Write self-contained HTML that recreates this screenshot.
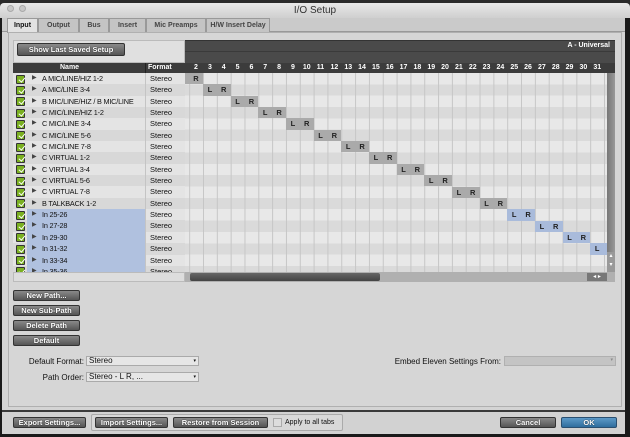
<!DOCTYPE html>
<html><head><style>
*{margin:0;padding:0;box-sizing:border-box}
body{width:630px;height:437px;overflow:hidden;background:#1a1a1a;font-family:"Liberation Sans",sans-serif;font-size:8px;color:#111;position:relative}
.a{position:absolute}
.btn{position:absolute;height:11px;background:linear-gradient(#8a8a8a,#555);border:1px solid #333;border-radius:2px;color:#fff;font-weight:bold;font-size:7.5px;text-align:center;line-height:9px;text-shadow:0 0 1px #000}
.tab{position:absolute;top:18px;height:14px;background:#c4c4c4;border:1px solid #999;border-bottom:none;font-size:7px;font-weight:bold;color:#444;text-align:center;line-height:13px}
.row{height:11.35px;position:relative}
.lr{position:absolute;height:11.35px;line-height:11.35px;font-weight:bold;font-size:7.5px;background:#aaa;color:#222}
.lr span{position:absolute;width:13.83px;text-align:center}
.blue{background:#a9bbdb}
.chk{position:absolute;left:3px;top:1.5px;width:9px;height:9px;background:#7ab020;border:1px solid #333;border-radius:1px}
.chk:after{content:"";position:absolute;left:2.5px;top:0px;width:2.5px;height:5px;border:solid #fff;border-width:0 1.5px 1.5px 0;transform:rotate(40deg)}
.tri{position:absolute;left:19px;top:0;font-size:6px;color:#444;line-height:11.35px}
.nm{position:absolute;left:29px;line-height:11.35px;white-space:nowrap;font-size:7.3px;letter-spacing:-0.2px}
.fm{position:absolute;left:137px;line-height:11.35px;font-size:7.5px}
.nb{position:absolute;width:13.83px;text-align:center;color:#fff;font-weight:bold;font-size:7px;top:64px}
</style></head><body>
<div class="a" style="left:0;top:0;width:630px;height:5px;background:#2a2a2a"></div>
<div class="a" style="left:0;top:3px;width:630px;height:15px;background:linear-gradient(#e8e8e8,#cfcfcf);border-radius:4px 4px 0 0;text-align:center;font-size:10px;line-height:15px;color:#333">I/O Setup</div>
<div class="a" style="left:7px;top:5px;width:7px;height:7px;border-radius:50%;background:#c8c8c8;border:1px solid #aaa"></div>
<div class="a" style="left:19px;top:5px;width:7px;height:7px;border-radius:50%;background:#c8c8c8;border:1px solid #aaa"></div>
<div class="a" style="left:2px;top:18px;width:623px;height:416px;background:#d4d4d4"></div>
<div class="a" style="left:2px;top:18px;width:623px;height:14px;background:#cacaca;border-bottom:1px solid #999"></div>
<div class="tab" style="left:7px;width:31px;background:#e2e2e2;height:15px;color:#111">Input</div>
<div class="tab" style="left:38px;width:41px">Output</div>
<div class="tab" style="left:79px;width:30px">Bus</div>
<div class="tab" style="left:109px;width:37px">Insert</div>
<div class="tab" style="left:146px;width:60px">Mic Preamps</div>
<div class="tab" style="left:206px;width:64px">H/W Insert Delay</div>
<div class="a" style="left:8px;top:32px;width:614px;height:375px;background:#d6d6d6;border:1px solid #b0b0b0"></div>
<div class="a" style="left:13px;top:40px;width:172px;height:23px;background:#e0e0e0;border:1px solid #bbb"></div>
<div class="btn" style="left:17px;top:43px;width:108px;height:13px;line-height:11px">Show Last Saved Setup</div>
<div class="a" style="left:185px;top:40px;width:430px;height:23px;background:#4a4a4a;border-top:1px solid #333"></div>
<div class="a" style="left:185px;top:51px;width:430px;height:1px;background:#3a3a3a"></div>
<div class="a" style="left:540px;top:42px;width:70px;text-align:right;color:#fff;font-weight:bold;font-size:7px">A - Universal</div>
<div class="a" style="left:13px;top:63px;width:602px;height:10px;background:#3c3c3c"></div>
<div class="a" style="left:60px;top:64px;color:#fff;font-weight:bold;font-size:7px">Name</div>
<div class="a" style="left:148px;top:64px;color:#fff;font-weight:bold;font-size:7px">Format</div>
<div class="a" style="left:145px;top:63px;width:1px;height:10px;background:#222"></div>
<div class="nb" style="left:189px">2</div><div class="nb" style="left:203px">3</div><div class="nb" style="left:216.8px">4</div><div class="nb" style="left:230.7px">5</div><div class="nb" style="left:244.5px">6</div><div class="nb" style="left:258.3px">7</div><div class="nb" style="left:272.2px">8</div><div class="nb" style="left:286px">9</div><div class="nb" style="left:299.8px">10</div><div class="nb" style="left:313.6px">11</div><div class="nb" style="left:327.5px">12</div><div class="nb" style="left:341.3px">13</div><div class="nb" style="left:355.1px">14</div><div class="nb" style="left:369px">15</div><div class="nb" style="left:382.8px">16</div><div class="nb" style="left:396.6px">17</div><div class="nb" style="left:410.5px">18</div><div class="nb" style="left:424.3px">19</div><div class="nb" style="left:438.1px">20</div><div class="nb" style="left:452px">21</div><div class="nb" style="left:465.8px">22</div><div class="nb" style="left:479.6px">23</div><div class="nb" style="left:493.5px">24</div><div class="nb" style="left:507.3px">25</div><div class="nb" style="left:521.1px">26</div><div class="nb" style="left:535px">27</div><div class="nb" style="left:548.8px">28</div><div class="nb" style="left:562.6px">29</div><div class="nb" style="left:576.5px">30</div><div class="nb" style="left:590.3px">31</div>
<div class="a" style="left:13px;top:73px;width:172px;height:199px;overflow:hidden;background:#dcdcdc">
<div class="row" style="background:#e4e4e4"><div class="chk"></div><span class="tri">▶</span><span class="nm">A MIC/LINE/HIZ 1-2</span><span class="fm">Stereo</span></div>
<div class="row" style="background:#d8d8d8"><div class="chk"></div><span class="tri">▶</span><span class="nm">A MIC/LINE 3-4</span><span class="fm">Stereo</span></div>
<div class="row" style="background:#e4e4e4"><div class="chk"></div><span class="tri">▶</span><span class="nm">B MIC/LINE/HIZ / B MIC/LINE</span><span class="fm">Stereo</span></div>
<div class="row" style="background:#d8d8d8"><div class="chk"></div><span class="tri">▶</span><span class="nm">C MIC/LINE/HIZ 1-2</span><span class="fm">Stereo</span></div>
<div class="row" style="background:#e4e4e4"><div class="chk"></div><span class="tri">▶</span><span class="nm">C MIC/LINE 3-4</span><span class="fm">Stereo</span></div>
<div class="row" style="background:#d8d8d8"><div class="chk"></div><span class="tri">▶</span><span class="nm">C MIC/LINE 5-6</span><span class="fm">Stereo</span></div>
<div class="row" style="background:#e4e4e4"><div class="chk"></div><span class="tri">▶</span><span class="nm">C MIC/LINE 7-8</span><span class="fm">Stereo</span></div>
<div class="row" style="background:#d8d8d8"><div class="chk"></div><span class="tri">▶</span><span class="nm">C VIRTUAL 1-2</span><span class="fm">Stereo</span></div>
<div class="row" style="background:#e4e4e4"><div class="chk"></div><span class="tri">▶</span><span class="nm">C VIRTUAL 3-4</span><span class="fm">Stereo</span></div>
<div class="row" style="background:#d8d8d8"><div class="chk"></div><span class="tri">▶</span><span class="nm">C VIRTUAL 5-6</span><span class="fm">Stereo</span></div>
<div class="row" style="background:#e4e4e4"><div class="chk"></div><span class="tri">▶</span><span class="nm">C VIRTUAL 7-8</span><span class="fm">Stereo</span></div>
<div class="row" style="background:#d8d8d8"><div class="chk"></div><span class="tri">▶</span><span class="nm">B TALKBACK 1-2</span><span class="fm">Stereo</span></div>
<div class="row" style="background:linear-gradient(to right,#e4e4e4 14px,#b0c1df 14px,#b0c1df 132px,#e4e4e4 132px)"><div class="chk"></div><span class="tri">▶</span><span class="nm">In 25-26</span><span class="fm">Stereo</span></div>
<div class="row" style="background:linear-gradient(to right,#d8d8d8 14px,#b0c1df 14px,#b0c1df 132px,#d8d8d8 132px)"><div class="chk"></div><span class="tri">▶</span><span class="nm">In 27-28</span><span class="fm">Stereo</span></div>
<div class="row" style="background:linear-gradient(to right,#e4e4e4 14px,#b0c1df 14px,#b0c1df 132px,#e4e4e4 132px)"><div class="chk"></div><span class="tri">▶</span><span class="nm">In 29-30</span><span class="fm">Stereo</span></div>
<div class="row" style="background:linear-gradient(to right,#d8d8d8 14px,#b0c1df 14px,#b0c1df 132px,#d8d8d8 132px)"><div class="chk"></div><span class="tri">▶</span><span class="nm">In 31-32</span><span class="fm">Stereo</span></div>
<div class="row" style="background:linear-gradient(to right,#e4e4e4 14px,#b0c1df 14px,#b0c1df 132px,#e4e4e4 132px)"><div class="chk"></div><span class="tri">▶</span><span class="nm">In 33-34</span><span class="fm">Stereo</span></div>
<div class="row" style="background:linear-gradient(to right,#d8d8d8 14px,#b0c1df 14px,#b0c1df 132px,#d8d8d8 132px)"><div class="chk"></div><span class="tri">▶</span><span class="nm">In 35-36</span><span class="fm">Stereo</span></div>
</div>
<div class="a" style="left:145px;top:73px;width:1px;height:199px;background:#c4c4c4"></div>
<div class="a" style="left:185px;top:73px;width:422px;height:199px;overflow:hidden;background:repeating-linear-gradient(#e8e8e8 0,#e8e8e8 11.35px,#dadada 11.35px,#dadada 22.7px)">
<div class="a" style="left:0;top:0;width:422px;height:199px;background-image:linear-gradient(to right,#c6c6c6 1px,transparent 1px);background-size:13.83px 100%;background-position:4.17px 0"></div>
<div class="lr" style="left:0;top:0;width:18px"><span style="left:4px">R</span></div>
<div class="lr" style="left:18px;top:11.35px;width:27.66px"><span style="left:0">L</span><span style="left:13.83px">R</span></div>
<div class="lr" style="left:45.7px;top:22.7px;width:27.66px"><span style="left:0">L</span><span style="left:13.83px">R</span></div>
<div class="lr" style="left:73.3px;top:34.05px;width:27.66px"><span style="left:0">L</span><span style="left:13.83px">R</span></div>
<div class="lr" style="left:101px;top:45.4px;width:27.66px"><span style="left:0">L</span><span style="left:13.83px">R</span></div>
<div class="lr" style="left:128.6px;top:56.75px;width:27.66px"><span style="left:0">L</span><span style="left:13.83px">R</span></div>
<div class="lr" style="left:156.3px;top:68.1px;width:27.66px"><span style="left:0">L</span><span style="left:13.83px">R</span></div>
<div class="lr" style="left:184px;top:79.45px;width:27.66px"><span style="left:0">L</span><span style="left:13.83px">R</span></div>
<div class="lr" style="left:211.6px;top:90.8px;width:27.66px"><span style="left:0">L</span><span style="left:13.83px">R</span></div>
<div class="lr" style="left:239.3px;top:102.15px;width:27.66px"><span style="left:0">L</span><span style="left:13.83px">R</span></div>
<div class="lr" style="left:267px;top:113.5px;width:27.66px"><span style="left:0">L</span><span style="left:13.83px">R</span></div>
<div class="lr" style="left:294.6px;top:124.85px;width:27.66px"><span style="left:0">L</span><span style="left:13.83px">R</span></div>
<div class="lr blue" style="left:322.3px;top:136.2px;width:27.66px"><span style="left:0">L</span><span style="left:13.83px">R</span></div>
<div class="lr blue" style="left:350px;top:147.55px;width:27.66px"><span style="left:0">L</span><span style="left:13.83px">R</span></div>
<div class="lr blue" style="left:377.6px;top:158.9px;width:27.66px"><span style="left:0">L</span><span style="left:13.83px">R</span></div>
<div class="lr blue" style="left:405.3px;top:170.25px;width:16.7px"><span style="left:0">L</span></div>
</div>
<div class="a" style="left:607px;top:73px;width:8px;height:199px;background:linear-gradient(to right,#777,#999)"></div>
<div class="a" style="left:607px;top:252px;width:8px;height:20px;background:#999;color:#fff;font-size:6px;text-align:center;line-height:9px">▴<br>▾</div>
<div class="a" style="left:13px;top:272px;width:172px;height:10px;background:#ddd;border:1px solid #bbb"></div>
<div class="a" style="left:185px;top:272px;width:430px;height:10px;background:#b0b0b0"></div>
<div class="a" style="left:190px;top:273px;width:190px;height:8px;background:linear-gradient(#666,#444);border-radius:2px"></div>
<div class="a" style="left:587px;top:273px;width:20px;height:8px;background:#777;color:#fff;font-size:6px;text-align:center;line-height:8px">◂ ▸</div>
<div class="btn" style="left:13px;top:290px;width:67px">New Path...</div>
<div class="btn" style="left:13px;top:305px;width:67px">New Sub-Path</div>
<div class="btn" style="left:13px;top:320px;width:67px">Delete Path</div>
<div class="btn" style="left:13px;top:335px;width:67px">Default</div>
<div class="a" style="left:20px;top:357px;width:64px;text-align:right">Default Format:</div>
<div class="a" style="left:86px;top:356px;width:113px;height:10px;background:#e6e6e6;border:1px solid #aaa;line-height:8px;padding-left:2px">Stereo<span style="position:absolute;right:2px;font-size:5px">▾</span></div>
<div class="a" style="left:20px;top:373px;width:64px;text-align:right">Path Order:</div>
<div class="a" style="left:86px;top:372px;width:113px;height:10px;background:#e6e6e6;border:1px solid #aaa;line-height:8px;padding-left:2px">Stereo - L R, ...<span style="position:absolute;right:2px;font-size:5px">▾</span></div>
<div class="a" style="left:380px;top:357px;width:121px;text-align:right">Embed Eleven Settings From:</div>
<div class="a" style="left:504px;top:356px;width:112px;height:10px;background:#c4c4c4;border:1px solid #b0b0b0"><span style="position:absolute;right:2px;font-size:5px;color:#888">▾</span></div>
<div class="a" style="left:2px;top:410px;width:623px;height:24px;background:#d2d2d2;border-top:2px solid #3a3a3a"></div>
<div class="btn" style="left:13px;top:417px;width:73px">Export Settings...</div>
<div class="a" style="left:91px;top:414px;width:252px;height:17px;border:1px solid #aaa;border-radius:2px;background:#d8d8d8"></div>
<div class="btn" style="left:95px;top:417px;width:73px">Import Settings...</div>
<div class="btn" style="left:173px;top:417px;width:95px">Restore from Session</div>
<div class="a" style="left:273px;top:418px;width:9px;height:9px;background:#ddd;border:1px solid #aaa"></div>
<div class="a" style="left:285px;top:419px;font-size:7px">Apply to all tabs</div>
<div class="btn" style="left:500px;top:417px;width:56px">Cancel</div>
<div class="btn" style="left:561px;top:417px;width:56px;background:linear-gradient(#5d9ac8,#2f6e9e);border-color:#2a4f70">OK</div>
</body></html>
